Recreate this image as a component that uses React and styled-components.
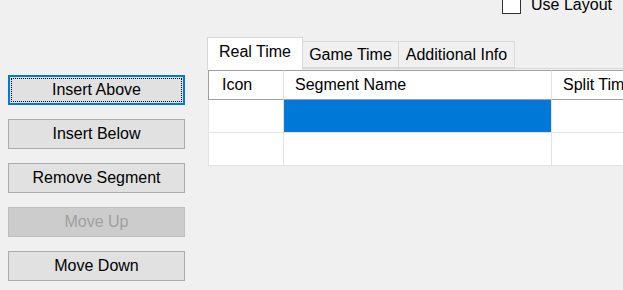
import React from 'react';
import styled, { createGlobalStyle, css } from 'styled-components';

const GlobalStyle = createGlobalStyle`
  html, body {
    margin: 0;
    padding: 0;
    background: #f0f0f0;
  }
  * {
    box-sizing: border-box;
  }
`;

const Window = styled.div`
  width: 623px;
  height: 290px;
  overflow: hidden;
  background: #f0f0f0;
  font-family: "Liberation Sans", Arial, sans-serif;
  font-size: 16px;
  color: #000;
  display: flex;
  flex-direction: column;
`;

const TopBar = styled.div`
  height: 37px;
  flex-shrink: 0;
  display: flex;
  justify-content: flex-end;
  padding-right: 11px;
`;

const CheckRow = styled.label`
  display: flex;
  align-items: center;
  gap: 10px;
  height: 18px;
  margin-top: -4px;
`;

const CheckBox = styled.span`
  width: 19px;
  height: 18px;
  border: 1px solid #333333;
  background: #ffffff;
`;

const Body = styled.div`
  flex: 1;
  display: flex;
  min-height: 0;
`;

const Sidebar = styled.div`
  width: 207px;
  flex-shrink: 0;
  padding: 38px 0 0 8px;
  display: flex;
  flex-direction: column;
  gap: 14px;
`;

const Button = styled.button`
  position: relative;
  width: 177px;
  height: 30px;
  font: inherit;
  color: #000;
  background: #e1e1e1;
  border: 1px solid #adadad;
  padding: 0;
  margin: 0;

  ${p => p.$focused && css`
    border: 2px solid #0078d7;
    &::after {
      content: '';
      position: absolute;
      inset: 1px;
      border: 1px dotted #000;
    }
  `}

  &:disabled {
    background: #cccccc;
    border-color: #bfbfbf;
    color: #a0a0a0;
  }
`;

const Content = styled.div`
  flex: 1;
  min-width: 0;
  display: flex;
  flex-direction: column;
`;

const TabStrip = styled.div`
  display: flex;
  align-items: flex-end;
  height: 31px;
  position: relative;
  z-index: 1;
`;

const Tab = styled.div`
  width: ${p => p.$width}px;
  display: flex;
  justify-content: center;
  align-items: center;
  border: 1px solid #d9d9d9;
  white-space: nowrap;
  ${p => p.$active ? css`
    height: 33px;
    margin-bottom: -2px;
    padding-bottom: 4px;
    background: #ffffff;
    border-bottom: none;
  ` : css`
    height: 27px;
    background: #f0f0f0;
    border-left: none;
    padding-top: 1px;
  `}
`;

const TabPanel = styled.div`
  border-top: 1px solid #d9d9d9;
  padding: 1px 0 0 1px;
`;

const Grid = styled.div`
  display: grid;
  grid-template-columns: 76px 268px 200px;
  width: 544px;
  background: #ffffff;
`;

const HeaderCell = styled.div`
  height: 30px;
  display: flex;
  align-items: center;
  padding-left: 11px;
  border-top: 1px solid #a0a0a0;
  border-bottom: 1px solid #a0a0a0;
  border-right: 1px solid #e3e3e3;
  white-space: nowrap;
  ${p => p.$first && css`
    border-left: 1px solid #a0a0a0;
    padding-left: 13px;
  `}
`;

const Cell = styled.div`
  height: ${p => p.$h}px;
  border-bottom: 1px solid #e3e3e3;
  border-right: 1px solid #e3e3e3;
  background: ${p => p.$selected ? '#0078d7' : '#ffffff'};
  ${p => p.$first && css`
    border-left: 1px solid #e3e3e3;
  `}
`;

const buttons = [
  { label: 'Insert Above', focused: true },
  { label: 'Insert Below' },
  { label: 'Remove Segment' },
  { label: 'Move Up', disabled: true },
  { label: 'Move Down' },
];

const tabs = [
  { label: 'Real Time', width: 96, active: true },
  { label: 'Game Time', width: 96 },
  { label: 'Additional Info', width: 116 },
];

const columns = ['Icon', 'Segment Name', 'Split Time'];

const rows = [
  { h: 33, selected: 1 },
  { h: 33, selected: -1 },
];

export default function App() {
  return (
    <>
      <GlobalStyle />
      <Window>
        <TopBar>
          <CheckRow>
            <CheckBox />
            Use Layout
          </CheckRow>
        </TopBar>
        <Body>
          <Sidebar>
            {buttons.map(b => (
              <Button key={b.label} $focused={b.focused} disabled={b.disabled}>
                {b.label}
              </Button>
            ))}
          </Sidebar>
          <Content>
            <TabStrip>
              {tabs.map(t => (
                <Tab key={t.label} $width={t.width} $active={t.active}>
                  {t.label}
                </Tab>
              ))}
            </TabStrip>
            <TabPanel>
              <Grid>
                {columns.map((c, i) => (
                  <HeaderCell key={c} $first={i === 0}>{c}</HeaderCell>
                ))}
                {rows.map((r, ri) =>
                  columns.map((c, ci) => (
                    <Cell key={ri + c} $h={r.h} $first={ci === 0} $selected={r.selected === ci} />
                  ))
                )}
              </Grid>
            </TabPanel>
          </Content>
        </Body>
      </Window>
    </>
  );
}
